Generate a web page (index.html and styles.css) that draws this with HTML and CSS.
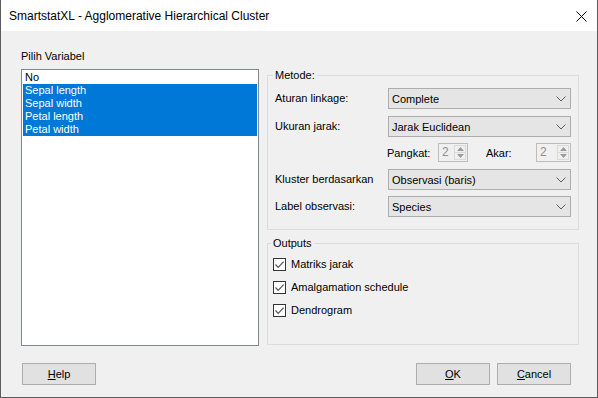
FILE: index.html
```html
<!DOCTYPE html>
<html>
<head>
<meta charset="utf-8">
<title>SmartstatXL</title>
<link rel="stylesheet" href="styles.css">
</head>
<body>
<div class="window">
  <div class="titlebar">
    <span class="title">SmartstatXL - Agglomerative Hierarchical Cluster</span>
    <svg class="close" width="11" height="11" viewBox="0 0 11 11"><path d="M0.5 0.5 L10.5 10.5 M10.5 0.5 L0.5 10.5" stroke="#000" stroke-width="1" fill="none"/></svg>
  </div>
  <div class="main">
    <div class="left">
      <div class="caption">Pilih Variabel</div>
      <div class="listbox">
        <div class="item">No</div>
        <div class="item sel">Sepal length</div>
        <div class="item sel">Sepal width</div>
        <div class="item sel">Petal length</div>
        <div class="item sel">Petal width</div>
      </div>
    </div>
    <div class="right">
      <fieldset class="group metode">
        <legend>Metode:</legend>
        <div class="form">
          <div class="lbl">Aturan linkage:</div>
          <div class="combo"><span>Complete</span><svg class="chev" width="10" height="6" viewBox="0 0 10 6"><path d="M0.5 0.5 L5 5 L9.5 0.5" stroke="#606060" stroke-width="1" fill="none"/></svg></div>
          <div class="lbl">Ukuran jarak:</div>
          <div class="combo"><span>Jarak Euclidean</span><svg class="chev" width="10" height="6" viewBox="0 0 10 6"><path d="M0.5 0.5 L5 5 L9.5 0.5" stroke="#606060" stroke-width="1" fill="none"/></svg></div>
          <div class="spinrow">
            <span class="spinlbl pangkat">Pangkat:</span>
            <div class="spin s30"><span class="val">2</span><div class="btns"><div class="btn"><svg width="7" height="4" viewBox="0 0 7 4"><path d="M0 4 L3.5 0 L7 4 Z" fill="#9a9a9a"/></svg></div><div class="btn"><svg width="7" height="4" viewBox="0 0 7 4"><path d="M0 0 L3.5 4 L7 0 Z" fill="#9a9a9a"/></svg></div></div></div>
            <span class="spinlbl akar">Akar:</span>
            <div class="spin s35"><span class="val">2</span><div class="btns"><div class="btn"><svg width="7" height="4" viewBox="0 0 7 4"><path d="M0 4 L3.5 0 L7 4 Z" fill="#9a9a9a"/></svg></div><div class="btn"><svg width="7" height="4" viewBox="0 0 7 4"><path d="M0 0 L3.5 4 L7 0 Z" fill="#9a9a9a"/></svg></div></div></div>
          </div>
          <div class="lbl">Kluster berdasarkan</div>
          <div class="combo"><span>Observasi (baris)</span><svg class="chev" width="10" height="6" viewBox="0 0 10 6"><path d="M0.5 0.5 L5 5 L9.5 0.5" stroke="#606060" stroke-width="1" fill="none"/></svg></div>
          <div class="lbl">Label observasi:</div>
          <div class="combo"><span>Species</span><svg class="chev" width="10" height="6" viewBox="0 0 10 6"><path d="M0.5 0.5 L5 5 L9.5 0.5" stroke="#606060" stroke-width="1" fill="none"/></svg></div>
        </div>
      </fieldset>
      <fieldset class="group outputs">
        <legend>Outputs</legend>
        <div class="checks">
          <div class="check"><span class="box"><svg width="11" height="11" viewBox="0 0 11 11"><path d="M1.5 5.5 L4.2 8.3 L9.6 2.6" stroke="#555" stroke-width="1.2" fill="none"/></svg></span><span>Matriks jarak</span></div>
          <div class="check"><span class="box"><svg width="11" height="11" viewBox="0 0 11 11"><path d="M1.5 5.5 L4.2 8.3 L9.6 2.6" stroke="#555" stroke-width="1.2" fill="none"/></svg></span><span>Amalgamation schedule</span></div>
          <div class="check"><span class="box"><svg width="11" height="11" viewBox="0 0 11 11"><path d="M1.5 5.5 L4.2 8.3 L9.6 2.6" stroke="#555" stroke-width="1.2" fill="none"/></svg></span><span>Dendrogram</span></div>
        </div>
      </fieldset>
    </div>
  </div>
  <div class="footer">
    <div class="button"><u>H</u>elp</div>
    <div class="button ok"><u>O</u>K</div>
    <div class="button"><u>C</u>ancel</div>
  </div>
</div>
</body>
</html>
```
FILE: styles.css
```css
* { box-sizing: border-box; }
html, body { margin: 0; padding: 0; }
body {
  font-family: "Liberation Sans", Arial, sans-serif;
  font-size: 11px;
  color: #000;
  background: #f0f0f0;
}
.window {
  width: 598px;
  height: 398px;
  background: #f0f0f0;
  border: 1px solid #5c5c5c;
  border-top: none;
  display: flex;
  flex-direction: column;
}
.titlebar {
  height: 31px;
  flex: none;
  background: #fff;
  display: flex;
  align-items: center;
  justify-content: space-between;
  padding: 0 10px 0 8px;
}
.title {
  font-size: 12px;
  color: #000;
}
.close { display: block; margin-top: 1px; }
.main {
  display: grid;
  grid-template-columns: 238px 312px;
  column-gap: 8px;
  padding: 19px 0 0 20px;
  align-items: start;
}
.caption {
  line-height: 13px;
  height: 13px;
  margin-bottom: 6px;
}
.listbox {
  height: 277px;
  background: #fff;
  border: 1px solid #828790;
  padding: 1px;
}
.item {
  height: 13px;
  line-height: 13px;
  padding-left: 2px;
  white-space: nowrap;
}
.item.sel {
  background: #0078d7;
  color: #fff;
}
.right {
  margin-top: 19px;
  display: flex;
  flex-direction: column;
}
.group {
  margin: 0;
  width: 312px;
  border: 1px solid #dcdcdc;
  min-width: 0;
}
.group legend {
  padding: 0 2px;
  line-height: 13px;
  height: 13px;
  margin-left: -2px;
}
.metode {
  padding: 6px 7px 12px 7px;
}
.outputs {
  margin-top: 7px;
  height: 108px;
  padding: 4px 5px 0 3px;
}
.outputs legend { margin-left: 0; }
.form {
  display: grid;
  grid-template-columns: 113px 183px;
  grid-template-rows: 28px 27px 26px 27px 21px;
  align-items: start;
}
.lbl {
  grid-column: 1;
  line-height: 21px;
  height: 21px;
  white-space: nowrap;
}
.combo {
  grid-column: 2;
  height: 21px;
  background: #e5e5e5;
  border: 1px solid #adadad;
  display: flex;
  align-items: center;
  justify-content: space-between;
  padding: 0 4px 0 3px;
  white-space: nowrap;
}
.chev { display: block; }
.spinrow {
  grid-column: 2;
  height: 19px;
  display: flex;
  align-items: center;
  margin-left: -1px;
}
.spinlbl { white-space: nowrap; }
.pangkat { width: 51px; }
.akar { width: 50px; margin-left: 18px; }
.spin {
  height: 19px;
  border: 1px solid #bcbcbc;
  background: #f0f0f0;
  display: flex;
}
.s30 { width: 30px; }
.s35 { width: 35px; }
.val {
  flex: 1;
  padding-left: 3px;
  line-height: 17px;
  color: #8e8e8e;
  font-size: 12px;
}
.btns {
  width: 13px;
  display: flex;
  flex-direction: column;
  padding: 1px 1px 1px 0;
}
.btn {
  flex: 1;
  border: 1px solid #dadada;
  background: #f0f0f0;
  display: flex;
  align-items: center;
  justify-content: center;
}
.btn + .btn { border-top: none; }
.btn svg { display: block; }
.checks {
  display: flex;
  flex-direction: column;
  gap: 3px;
}
.check {
  height: 20px;
  display: flex;
  align-items: center;
  gap: 5px;
  padding-left: 2px;
}
.box {
  width: 13px;
  height: 13px;
  border: 1px solid #333;
  background: #fff;
  display: block;
}
.box svg { display: block; }
.footer {
  display: flex;
  padding: 17px 26px 0 21px;
  gap: 7px;
}
.button {
  width: 74px;
  height: 22px;
  background: #e1e1e1;
  border: 1px solid #adadad;
  display: flex;
  align-items: center;
  justify-content: center;
}
.button.ok { margin-left: auto; }
```
